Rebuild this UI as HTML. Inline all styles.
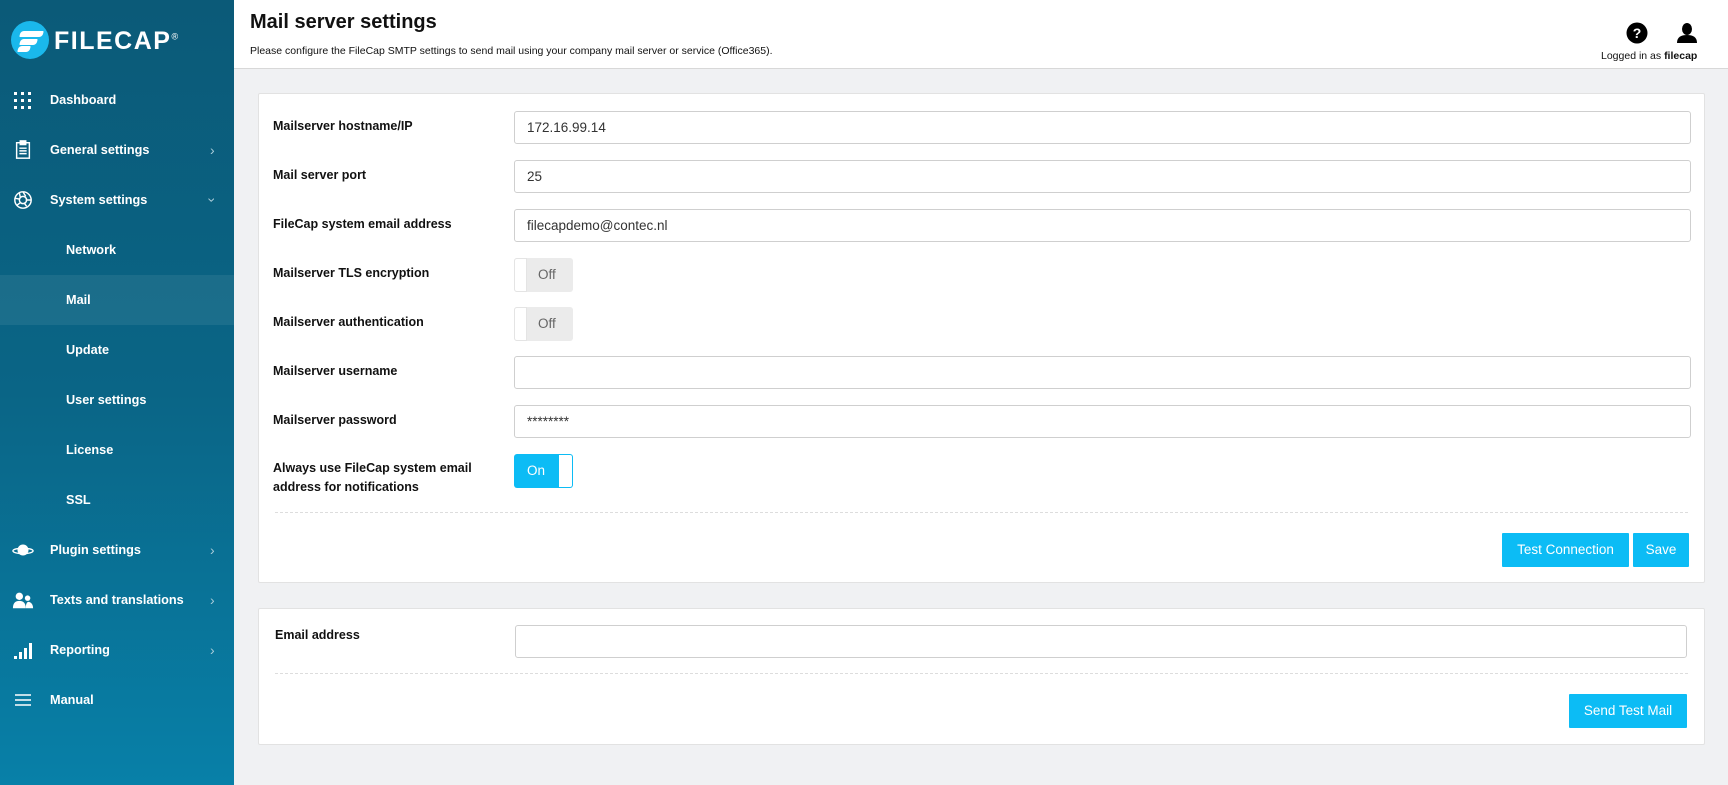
<!DOCTYPE html>
<html><head><style>
*{box-sizing:border-box;margin:0;padding:0}
body{width:1728px;height:785px;overflow:hidden;font-family:"Liberation Sans",Arial,sans-serif;background:#f0f1f3;position:relative}
.sb{position:absolute;left:0;top:0;width:234px;height:785px;background:linear-gradient(180deg,#0b5a78 0%,#0a6586 50%,#0880a8 100%)}
.logo{position:absolute;left:11px;top:21px;width:38px;height:38px;border-radius:50%;background:#1ab8ec}
.logo i{position:absolute;left:9px;width:21px;height:6px;background:#fff;border-radius:3px 1px 3px 1px;transform:skewX(-15deg)}
.lt{position:absolute;left:54px;top:27px;color:#fff;font-weight:bold;font-size:25px;letter-spacing:1.5px}
.it{position:absolute;left:0;width:234px;height:50px;color:#fff;font-weight:bold;font-size:12.7px;line-height:50px}
.it span{position:absolute;left:50px}
.it.sub span{left:66px}
.it.act{background:rgba(255,255,255,0.07)}
.it .ch{position:absolute;left:210px;color:#a8cbd8;font-weight:normal;font-size:14px}
.ic{position:absolute;left:12px;top:15px;width:22px;height:20px}
.hd{position:absolute;left:234px;top:0;right:0;height:69px;background:#fff;border-bottom:1px solid #d8d8d8}
h1{position:absolute;left:16px;top:11px;font-size:20px;font-weight:bold;color:#111}
.st{position:absolute;left:16px;top:45px;font-size:10.5px;color:#111}
.panel{position:absolute;left:258px;width:1447px;background:#fff;border:1px solid #e2e2e2;border-radius:2px}
.lb{position:absolute;left:14px;font-size:12.5px;font-weight:bold;color:#111;line-height:19px}
.in{position:absolute;left:255px;width:1177px;height:33px;border:1px solid #cfcfcf;border-radius:3px;font-size:13.5px;color:#333;padding-left:12px;line-height:31px}
.tg{position:absolute;left:255px;width:59px;height:34px;border-radius:3px;background:#ebebeb;font-size:13.5px;color:#666;line-height:34px}
.tg b{position:absolute;left:0;top:0;width:13px;height:34px;background:#fff;border:1px solid #e4e4e4;border-radius:3px 0 0 3px}
.tg span{position:absolute;left:24px;font-weight:normal}
.tg.on{background:#0cbcf5;color:#fff}
.tg.on b{left:auto;right:1px;top:1px;height:32px;border:none;border-radius:0 2px 2px 0}
.tg.on span{left:13px}
.dash{position:absolute;left:16px;right:16px;border-top:1px dashed #ddd}
.btn{position:absolute;height:34px;background:#0cbcf5;color:#fff;font-size:13.5px;line-height:34px;text-align:center;border-radius:1px}
</style></head><body>
<div class="sb">
<div class="logo"><i style="top:10px;width:23px"></i><i style="top:18px;width:17px"></i><i style="top:25px;left:7px;width:12px"></i></div>
<div class="lt">FILECAP<sup style="font-size:9px;font-weight:normal">®</sup></div>
<div class="it" style="top:75px"><svg class="ic" viewBox="0 0 22 20" fill="#fff"><rect x="2" y="2" width="3" height="3"/><rect x="9" y="2" width="3" height="3"/><rect x="16" y="2" width="3" height="3"/><rect x="2" y="9" width="3" height="3"/><rect x="9" y="9" width="3" height="3"/><rect x="16" y="9" width="3" height="3"/><rect x="2" y="16" width="3" height="3"/><rect x="9" y="16" width="3" height="3"/><rect x="16" y="16" width="3" height="3"/></svg><span>Dashboard</span></div>
<div class="it" style="top:125px"><svg class="ic" viewBox="0 0 22 22" fill="none" stroke="#fff" stroke-width="1.6"><rect x="4" y="3" width="14" height="17"/><rect x="8" y="1" width="6" height="4" fill="#fff"/><path d="M7 9h8M7 12h8M7 15h8"/></svg><span>General settings</span><span class="ch">›</span></div>
<div class="it" style="top:175px"><svg class="ic" viewBox="0 0 22 22" fill="none" stroke="#fff" stroke-width="1.6"><circle cx="11" cy="11" r="9"/><circle cx="11" cy="11" r="4"/><path d="M11 2l3 5M20 11l-6 0M15 18l-3-4M4 17l4-3M2 9l5 1M7 3l1 5"/></svg><span>System settings</span><span class="ch" style="transform:rotate(90deg)">›</span></div>
<div class="it sub" style="top:225px"><span>Network</span></div>
<div class="it sub act" style="top:275px"><span>Mail</span></div>
<div class="it sub" style="top:325px"><span>Update</span></div>
<div class="it sub" style="top:375px"><span>User settings</span></div>
<div class="it sub" style="top:425px"><span>License</span></div>
<div class="it sub" style="top:475px"><span>SSL</span></div>
<div class="it" style="top:525px"><svg class="ic" viewBox="0 0 24 20" fill="#fff"><circle cx="12" cy="10" r="6"/><ellipse cx="12" cy="11" rx="11" ry="3" fill="none" stroke="#fff" stroke-width="1.5"/></svg><span>Plugin settings</span><span class="ch">›</span></div>
<div class="it" style="top:575px"><svg class="ic" viewBox="0 0 24 20" fill="#fff"><circle cx="8" cy="6" r="4"/><path d="M1 19c0-6 3-8 7-8s7 2 7 8z"/><circle cx="17" cy="8" r="3"/><path d="M15 19c0-4 1-7 3-7s5 2 5 7z"/></svg><span>Texts and translations</span><span class="ch">›</span></div>
<div class="it" style="top:625px"><svg class="ic" viewBox="0 0 22 20" fill="#fff"><rect x="2" y="16" width="3" height="3"/><rect x="7" y="12" width="3" height="7"/><rect x="12" y="8" width="3" height="11"/><rect x="17" y="3" width="3" height="16"/></svg><span>Reporting</span><span class="ch">›</span></div>
<div class="it" style="top:675px"><svg class="ic" viewBox="0 0 22 20" stroke="#fff" stroke-width="1.6"><path d="M3 5h16M3 10h16M3 15h16"/></svg><span>Manual</span></div>
</div>
<div class="hd"><h1>Mail server settings</h1><div class="st">Please configure the FileCap SMTP settings to send mail using your company mail server or service (Office365).</div>
<svg style="position:absolute;left:1392px;top:22px" width="22" height="22" viewBox="0 0 22 22"><circle cx="11" cy="11" r="10.5" fill="#000"/><text x="11" y="16" text-anchor="middle" fill="#fff" font-family="Liberation Sans" font-weight="bold" font-size="14">?</text></svg>
<svg style="position:absolute;left:1443px;top:22px" width="20" height="22" viewBox="0 0 20 22" fill="#000"><ellipse cx="10" cy="7" rx="5" ry="6"/><path d="M0 21c0-6 4-8 10-8s10 2 10 8z"/></svg>
<div style="position:absolute;left:1367px;top:50px;font-size:10.5px;color:#111">Logged in as <b>filecap</b></div></div>
<div class="panel" style="top:93px;height:490px">
<div class="lb" style="top:23px">Mailserver hostname/IP</div><div class="in" style="top:17px">172.16.99.14</div>
<div class="lb" style="top:72px">Mail server port</div><div class="in" style="top:66px">25</div>
<div class="lb" style="top:121px">FileCap system email address</div><div class="in" style="top:115px">filecapdemo@contec.nl</div>
<div class="lb" style="top:170px">Mailserver TLS encryption</div><div class="tg" style="top:164px"><b></b><span>Off</span></div>
<div class="lb" style="top:219px">Mailserver authentication</div><div class="tg" style="top:213px"><b></b><span>Off</span></div>
<div class="lb" style="top:268px">Mailserver username</div><div class="in" style="top:262px"></div>
<div class="lb" style="top:317px">Mailserver password</div><div class="in" style="top:311px">********</div>
<div class="lb" style="top:365px">Always use FileCap system email<br>address for notifications</div><div class="tg on" style="top:360px"><b></b><span>On</span></div>
<div class="dash" style="top:418px"></div>
<div class="btn" style="left:1243px;top:439px;width:127px">Test Connection</div>
<div class="btn" style="left:1374px;top:439px;width:56px">Save</div>
</div>
<div class="panel" style="top:608px;height:137px">
<div class="lb" style="top:17px;left:16px">Email address</div><div class="in" style="top:16px;left:256px;width:1172px"></div>
<div class="dash" style="top:64px"></div>
<div class="btn" style="left:1310px;top:85px;width:118px">Send Test Mail</div>
</div>
</body></html>
